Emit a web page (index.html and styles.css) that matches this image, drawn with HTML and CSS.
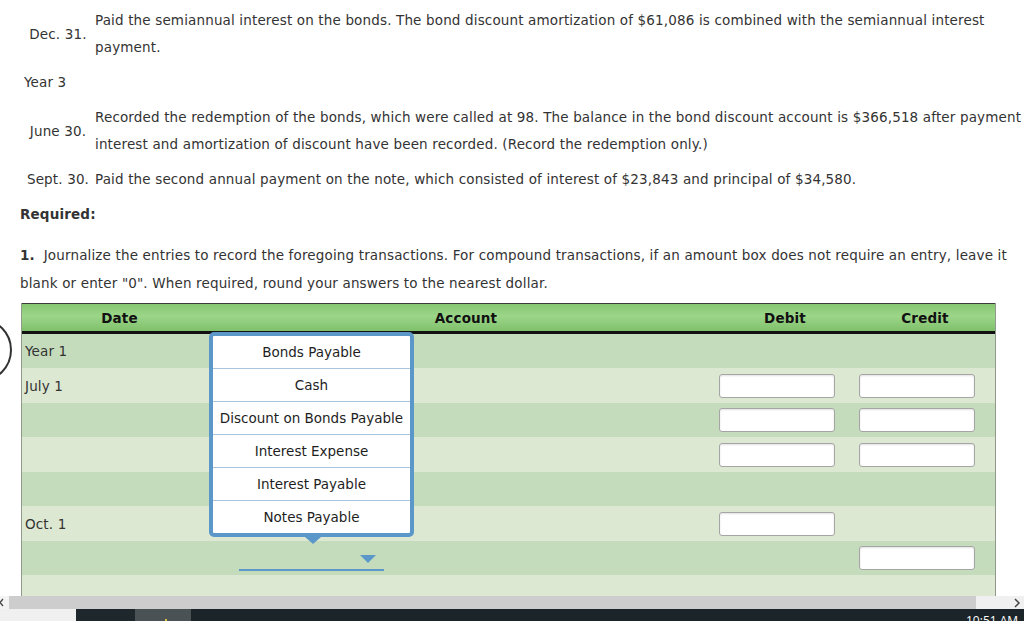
FILE: index.html
```html
<!DOCTYPE html>
<html>
<head>
<meta charset="utf-8">
<link rel="stylesheet" href="styles.css">
</head>
<body>
<div class="page">
  <div class="events">
    <div class="event">
      <div class="ev-date">Dec. 31.</div>
      <div class="ev-text"><span class="ln">Paid the semiannual interest on the bonds. The bond discount amortization of $61,086 is combined with the semiannual interest</span><span class="ln">payment.</span></div>
    </div>
    <div class="event year">Year 3</div>
    <div class="event">
      <div class="ev-date">June 30.</div>
      <div class="ev-text"><span class="ln">Recorded the redemption of the bonds, which were called at 98. The balance in the bond discount account is $366,518 after payment</span><span class="ln">interest and amortization of discount have been recorded. (Record the redemption only.)</span></div>
    </div>
    <div class="event">
      <div class="ev-date">Sept. 30.</div>
      <div class="ev-text"><span class="ln">Paid the second annual payment on the note, which consisted of interest of $23,843 and principal of $34,580.</span></div>
    </div>
  </div>

  <div class="required">Required:</div>
  <div class="instructions"><span class="ln"><b>1.</b>&nbsp; Journalize the entries to record the foregoing transactions. For compound transactions, if an amount box does not require an entry, leave it</span><span class="ln">blank or enter "0". When required, round your answers to the nearest dollar.</span></div>

  <div class="journal">
    <div class="jrow head">
      <div class="c-date">Date</div>
      <div class="c-acct">Account</div>
      <div class="c-debit">Debit</div>
      <div class="c-credit">Credit</div>
    </div>
    <div class="jrow dark">
      <div class="c-date">Year 1</div><div class="c-acct"></div><div class="c-debit"></div><div class="c-credit"></div>
    </div>
    <div class="jrow light">
      <div class="c-date">July 1</div><div class="c-acct"></div>
      <div class="c-debit"><span class="amt"></span></div><div class="c-credit"><span class="amt"></span></div>
    </div>
    <div class="jrow dark">
      <div class="c-date"></div><div class="c-acct"></div>
      <div class="c-debit"><span class="amt"></span></div><div class="c-credit"><span class="amt"></span></div>
    </div>
    <div class="jrow light">
      <div class="c-date"></div><div class="c-acct"></div>
      <div class="c-debit"><span class="amt"></span></div><div class="c-credit"><span class="amt"></span></div>
    </div>
    <div class="jrow dark">
      <div class="c-date"></div><div class="c-acct"></div><div class="c-debit"></div><div class="c-credit"></div>
    </div>
    <div class="jrow light">
      <div class="c-date">Oct. 1</div><div class="c-acct"></div>
      <div class="c-debit"><span class="amt"></span></div><div class="c-credit"></div>
    </div>
    <div class="jrow dark">
      <div class="c-date"></div>
      <div class="c-acct">
        <div class="select">
          <span class="caret"></span>
          <div class="popup">
            <div class="opt">Bonds Payable</div>
            <div class="opt">Cash</div>
            <div class="opt">Discount on Bonds Payable</div>
            <div class="opt">Interest Expense</div>
            <div class="opt">Interest Payable</div>
            <div class="opt">Notes Payable</div>
          </div>
        </div>
      </div>
      <div class="c-debit"></div><div class="c-credit"><span class="amt"></span></div>
    </div>
    <div class="jrow light">
      <div class="c-date"></div><div class="c-acct"></div><div class="c-debit"></div><div class="c-credit"></div>
    </div>
  </div>
  <div class="ring"></div>
</div>
<div class="hscroll">
  <div class="sb-left"><svg width="9" height="13" viewBox="0 0 9 13"><path d="M3 3 L0 6.5 L3 10" fill="none" stroke="#444" stroke-width="1.3"/></svg></div>
  <div class="sb-thumb"></div>
  <div class="sb-right"><svg width="10" height="13" viewBox="0 0 10 13"><path d="M3 3 L7 7 L3 11" fill="none" stroke="#444" stroke-width="1.5"/></svg></div>
</div>
<div class="taskbar">
  <div class="tb-start"></div>
  <div class="tb-a"></div>
  <div class="tb-b"><span class="tb-dot"></span></div>
  <div class="tb-rest"><span class="clock">10:51 AM</span></div>
</div>
</body>
</html>
```

FILE: styles.css
```css
html, body {
  margin: 0;
  padding: 0;
  width: 1024px;
  height: 621px;
  overflow: hidden;
  background: #fff;
}
body {
  font-family: "DejaVu Sans", Verdana, sans-serif;
  font-size: 13.5px;
  letter-spacing: 0.15px;
  color: #333;
}
.page {
  position: relative;
  height: 596px;
  overflow: hidden;
}
.ln {
  display: block;
  white-space: nowrap;
}
.events {
  padding: 7px 0 0 24px;
}
.event {
  display: flex;
  align-items: center;
  margin-bottom: 8px;
  line-height: 27px;
}
.ev-date {
  width: 68px;
  text-align: center;
  flex: none;
  white-space: nowrap;
}
.ev-text {
  padding-left: 3px;
}
.required {
  font-weight: bold;
  padding-left: 20px;
  line-height: 27px;
  margin-top: 2px;
}
.instructions {
  padding-left: 20px;
  line-height: 28px;
  margin-top: 13px;
}
.journal {
  margin: 6px 0 0 21px;
  width: 975px;
  border-left: 1px solid #8f9a8a;
  border-right: 1px solid #8f9a8a;
  box-sizing: border-box;
}
.jrow {
  display: grid;
  grid-template-columns: 195px 498px 140px 140px;
  height: 34px;
}
.jrow.light {
  height: 35px;
}
.jrow.head {
  height: 27px;
  border-top: 1px solid #3a3a3a;
  border-bottom: 3px solid #111;
  background: linear-gradient(to bottom, #86c672 0%, #9cd689 45%, #7fc06b 100%);
  font-weight: bold;
  color: #111;
  align-items: center;
}
.jrow.head > div {
  text-align: center;
}
.jrow.dark { background: #c5dcbc; }
.jrow.light { background: #dce8d1; }
.c-date {
  padding-left: 3px;
  display: flex;
  align-items: center;
}
.jrow.head .c-date { display: block; padding-left: 0; }
.c-debit, .c-credit {
  display: flex;
  align-items: center;
  padding-left: 4px;
}
.jrow.head .c-debit, .jrow.head .c-credit { display: block; padding-left: 0; }
.amt {
  display: block;
  width: 114px;
  height: 22px;
  background: #fff;
  border: 1px solid #a5a5a5;
  border-radius: 3px;
  box-shadow: inset 0 1px 2px rgba(0,0,0,0.12);
}
.c-acct {
  position: relative;
}
.select {
  position: relative;
  width: 145px;
  height: 22px;
  margin: 6px 0 0 22px;
  border-bottom: 2px solid #5b97c9;
}
.caret {
  position: absolute;
  right: 8px;
  top: 8px;
  width: 0;
  height: 0;
  border-left: 8px solid transparent;
  border-right: 8px solid transparent;
  border-top: 8px solid #5b97c9;
}
.popup {
  position: absolute;
  left: -30px;
  bottom: calc(100% + 10px);
  width: 205px;
  box-sizing: border-box;
  border: 4px solid #5b97c9;
  border-radius: 5px;
  background: #fff;
  z-index: 5;
  letter-spacing: 0;
}
.popup::after {
  content: "";
  position: absolute;
  left: 92px;
  bottom: -11px;
  border-left: 8px solid transparent;
  border-right: 8px solid transparent;
  border-top: 7px solid #5b97c9;
}
.opt {
  height: 32px;
  line-height: 32px;
  text-align: center;
  color: #1e1e1e;
  border-top: 1px solid #a8c4de;
  white-space: nowrap;
}
.opt:first-child {
  border-top: none;
}
.ring {
  position: absolute;
  left: -52px;
  top: 318px;
  width: 60px;
  height: 60px;
  border: 2px solid #333;
  border-radius: 50%;
}
.hscroll {
  display: flex;
  height: 13px;
}
.sb-left {
  width: 9px;
  background: #f3f3f3;
  overflow: hidden;
}
.sb-left svg, .sb-right svg { display: block; }
.sb-thumb {
  width: 967px;
  background: #cdcdcd;
}
.sb-right {
  flex: 1;
  background: #f0f0f0;
  display: flex;
  justify-content: flex-end;
  padding-right: 2px;
}
.taskbar {
  display: flex;
  height: 12px;
  overflow: hidden;
  background: #1b2429;
}
.tb-start {
  width: 76px;
  background: #f0f0f0;
}
.tb-a {
  width: 59px;
  background: #1e272c;
}
.tb-b {
  width: 56px;
  background: #4a5256;
  position: relative;
}
.tb-dot {
  position: absolute;
  left: 30px;
  bottom: 0;
  width: 2px;
  height: 2px;
  background: #d8c23a;
}
.tb-rest {
  flex: 1;
  position: relative;
}
.clock {
  position: absolute;
  left: 775px;
  top: 5px;
  color: #fff;
  font-family: "Segoe UI", "Open Sans", sans-serif;
  font-size: 12px;
  line-height: 14px;
  letter-spacing: 0;
}
```
